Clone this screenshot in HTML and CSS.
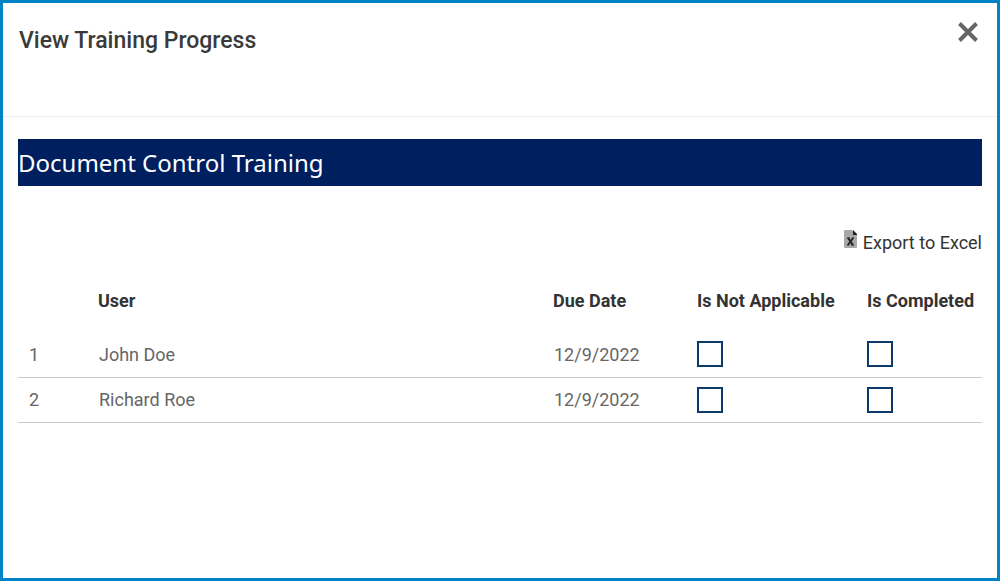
FILE: index.html
```
<!DOCTYPE html>
<html lang="en">

<head>
    <meta charset="UTF-8">
    <meta name="viewport" content="width=device-width, initial-scale=1.0">
    <title>View Training Progress</title>
    <link rel="stylesheet" href="styles.css">
</head>

<body>

    <div class="modal">
        <header class="modal-header">
            <h1>View Training Progress</h1>
            <button type="button" class="close" aria-label="Close">
                <svg width="22" height="22" viewBox="0 0 22 22">
                    <path d="M2.5 2.5 L19.5 19.5 M19.5 2.5 L2.5 19.5" stroke="#666" stroke-width="4" fill="none"/>
                </svg>
            </button>
        </header>

        <main class="modal-body">
            <h2>Document Control Training</h2>

            <div class="toolbar">
                <a href="#" class="export">
                    <svg width="13" height="18" viewBox="0 0 13 18">
                        <path d="M1 0 H8 L13 5 V17 Q13 18 12 18 H1 Q0 18 0 17 V1 Q0 0 1 0 Z" fill="#a8a8a8"/>
                        <path d="M9 0 L13 4 V5 H9 Z" fill="#222"/>
                        <path d="M4 8 L9 15 M9 8 L4 15" stroke="#222" stroke-width="2" fill="none"/>
                        <path d="M3 8 H6 M8 8 H10 M3 15 H5 M7 15 H10" stroke="#222" stroke-width="1" fill="none"/>
                    </svg>
                    Export to Excel
                </a>
            </div>

            <table>
                <thead>
                    <tr>
                        <th class="col-num"></th>
                        <th class="col-user">User</th>
                        <th class="col-date">Due Date</th>
                        <th class="col-na">Is Not Applicable</th>
                        <th class="col-done">Is Completed</th>
                    </tr>
                </thead>
                <tbody>
                    <tr>
                        <td class="col-num">1</td>
                        <td>John Doe</td>
                        <td>12/9/2022</td>
                        <td class="check"><input type="checkbox" aria-label="John Doe is not applicable"></td>
                        <td class="check"><input type="checkbox" aria-label="John Doe is completed"></td>
                    </tr>
                    <tr>
                        <td class="col-num">2</td>
                        <td>Richard Roe</td>
                        <td>12/9/2022</td>
                        <td class="check"><input type="checkbox" aria-label="Richard Roe is not applicable"></td>
                        <td class="check"><input type="checkbox" aria-label="Richard Roe is completed"></td>
                    </tr>
                </tbody>
            </table>
        </main>
    </div>

</body>

</html>
```
FILE: styles.css
```
* {
    box-sizing: border-box;
}

body {
    margin: 0;
    font-family: Roboto, Arial, sans-serif;
    font-size: 18px;
    color: #333;
    background-color: #fff;
}

.modal {
    min-height: 100vh;
    border: 3px solid #0082c6;
}

.modal-header {
    display: flex;
    justify-content: space-between;
    align-items: flex-start;
    min-height: 114px;
    padding: 18px 18px 0 16px;
    border-bottom: 1px solid #eee;
}

h1 {
    margin: 5px 0 0;
    font-size: 23px;
    line-height: 30px;
    font-weight: 500;
    color: #3a3a3a;
}

.close {
    display: flex;
    padding: 0;
    border: none;
    background: none;
    cursor: pointer;
}

.modal-body {
    padding: 22px 15px;
}

h2 {
    margin: 0;
    font-family: "Noto Sans", Tahoma, sans-serif;
    font-size: 24px;
    line-height: 47px;
    font-weight: 400;
    color: #fff;
    background-color: #001f5f;
}

.toolbar {
    display: flex;
    justify-content: flex-end;
    margin-top: 44px;
}

.export {
    display: flex;
    gap: 6px;
    line-height: 26px;
    color: #333;
    text-decoration: none;
}

table {
    width: 100%;
    margin-top: 18px;
    border-collapse: collapse;
    table-layout: fixed;
}

th {
    height: 58px;
    padding: 0 0 6px;
    text-align: left;
    font-weight: 700;
}

td {
    height: 45px;
    padding: 0 0 0 1px;
    color: #666;
    border-bottom: 1px solid #ccc;
}

.check {
    padding-left: 0;
}

.col-num {
    width: 80px;
    padding-left: 11px;
}

.col-date {
    width: 144px;
}

.col-na {
    width: 170px;
}

.col-done {
    width: 115px;
}

input[type="checkbox"] {
    display: block;
    width: 26px;
    height: 26px;
    margin: 0;
    appearance: none;
    border: 2px solid #0b3a6b;
    background-color: #fff;
}

input[type="checkbox"]:checked {
    background-color: #0b3a6b;
}
```
